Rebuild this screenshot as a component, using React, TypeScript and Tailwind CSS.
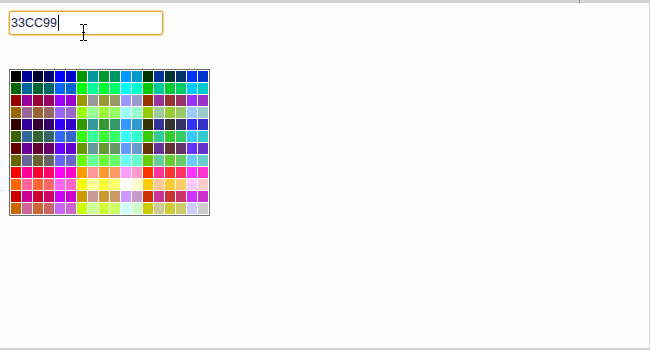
import React from 'react';

// web-safe palette, laid out like the classic picker: 12 rows x 18 columns
const VALS = ['00', '99', '33', '66', 'FF', 'CC'];

const colorAt = (row: number, col: number) => {
    const r = VALS[Math.floor(row / 2)];
    const g = VALS[(row % 2) * 3 + Math.floor(col / 6)];
    const b = VALS[col % 6];
    return `#${r}${g}${b}`;
};

const rows = Array.from({ length: 12 }, (_, r) => Array.from({ length: 18 }, (_, c) => colorAt(r, c)));

const IBeam = () => (
    <svg width="9" height="17" viewBox="0 0 9 17" className="absolute left-[79px] top-[24px]">
        <path d="M1 0.5h3M5 0.5h3M4.5 1v15M1 16.5h3M5 16.5h3M3 8.5h3" stroke="#000" strokeWidth="1" fill="none" />
    </svg>
);

export default function App() {
    return (
        <div className="relative w-[650px] h-[350px] flex flex-col bg-[#fdfdfd] font-['Liberation_Sans',Arial,sans-serif]">
            {/* Barre du haut */}
            <div className="flex h-[3px] bg-[#d4d4d4]">
                <div className="w-[579px]" />
                <div className="w-px bg-[#9a9a9a]" />
            </div>

            <div className="flex-1 flex flex-col pl-[9px] pt-[8px] border-r border-b-2 border-[#d2d2d2]">
                {/* Champ couleur */}
                <div className="w-[154px] h-[24px] flex items-center px-px rounded-[3px] border border-[#e0a641] ring-1 ring-[#f6d79c] bg-white">
                    <span className="text-[12.5px] leading-none text-[#1c1c4c]">33CC99</span>
                    <span className="w-px h-[16px] bg-black ml-px" />
                </div>

                {/* Palette */}
                <div className="mt-[34px] w-fit border border-[#6e6e6e] bg-white p-px flex flex-col gap-px">
                    {rows.map((row, i) => (
                        <div key={i} className="flex gap-px">
                            {row.map((c) => (
                                <div key={c} className="w-[10px] h-[11px]" style={{ backgroundColor: c }} />
                            ))}
                        </div>
                    ))}
                </div>
            </div>

            <IBeam />
        </div>
    );
}
